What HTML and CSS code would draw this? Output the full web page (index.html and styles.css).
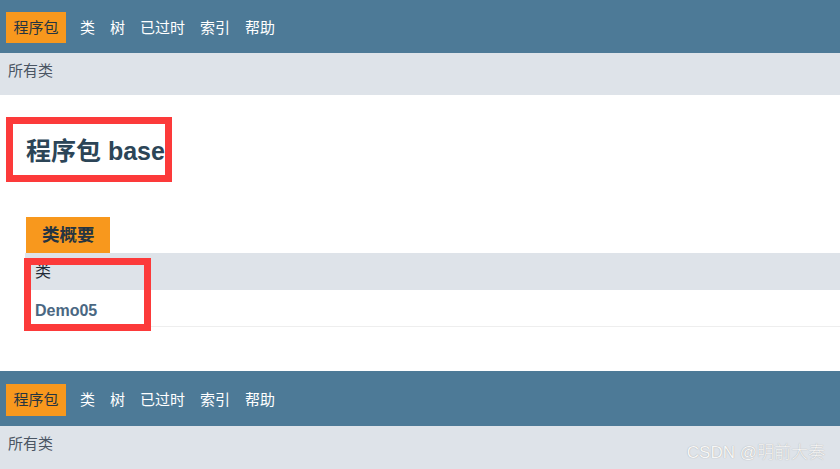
FILE: index.html
```html
<!DOCTYPE html>
<html lang="zh-CN">
<head>
<meta charset="utf-8">
<title>base</title>
<link rel="stylesheet" href="styles.css">
</head>
<body>
<div class="page">
  <nav class="topnav">
    <span class="nav-item active">程序包</span>
    <span class="nav-item">类</span>
    <span class="nav-item">树</span>
    <span class="nav-item">已过时</span>
    <span class="nav-item">索引</span>
    <span class="nav-item">帮助</span>
  </nav>
  <div class="subnav"><span class="subnav-text">所有类</span></div>

  <main class="content">
    <h1 class="title">程序包 base</h1>
    <section class="summary">
      <div class="caption">类概要</div>
      <div class="table">
        <div class="table-head">类</div>
        <div class="table-row"><a class="class-link">Demo05</a></div>
      </div>
    </section>
    <div class="mark mark-title"></div>
    <div class="mark mark-table"></div>
  </main>

  <nav class="topnav bottomnav">
    <span class="nav-item active">程序包</span>
    <span class="nav-item">类</span>
    <span class="nav-item">树</span>
    <span class="nav-item">已过时</span>
    <span class="nav-item">索引</span>
    <span class="nav-item">帮助</span>
  </nav>
  <div class="subnav subnav-bottom">
    <span class="subnav-text">所有类</span>
    <span class="watermark">CSDN @明前大奏</span>
  </div>
</div>
</body>
</html>
```

FILE: styles.css
```css
* { box-sizing: border-box; }

html, body {
  margin: 0;
  padding: 0;
  background: #ffffff;
}

body {
  font-family: "Liberation Sans", "Noto Sans CJK SC", sans-serif;
  color: #353833;
  overflow: hidden;
}

.page {
  width: 840px;
  height: 469px;
  overflow: hidden;
}

.topnav {
  height: 53px;
  background: #4d7a97;
  display: flex;
  align-items: flex-start;
  padding: 12px 0 0 6px;
}

.bottomnav {
  height: 55px;
  padding-top: 13px;
}

.nav-item {
  height: 31px;
  line-height: 31px;
  padding: 0 7.5px;
  font-size: 15px;
  color: #ffffff;
}

.bottomnav .nav-item {
  height: 32px;
  line-height: 32px;
}

.nav-item.active {
  background: #f8981d;
  color: #253441;
  margin-right: 6.5px;
}

.subnav {
  height: 42px;
  background: #dee3e9;
  padding: 8px 0 0 8px;
  display: flex;
  justify-content: space-between;
  align-items: flex-start;
}

.subnav-bottom {
  height: 43px;
}

.subnav-text {
  font-size: 15px;
  line-height: 20px;
  color: #4a5563;
}

.watermark {
  margin: 9px 15px 0 0;
  font-size: 17px;
  font-weight: 300;
  line-height: 20px;
  color: #f6f6f6;
  text-shadow: 0 0 1px #9a9a9a;
}

.content {
  position: relative;
  height: 276px;
  padding-top: 41px;
}

.title {
  margin: 0 0 0 26px;
  font-size: 25px;
  line-height: 30px;
  font-weight: bold;
  color: #2c4557;
}

.summary {
  margin: 51px 0 0 25px;
}

.caption {
  display: inline-block;
  margin-left: 1px;
  height: 36px;
  line-height: 36px;
  padding: 0 15.5px 0 16px;
  background: #f8981d;
  color: #253441;
  font-size: 17.5px;
  font-weight: bold;
}

.table-head {
  height: 37px;
  line-height: 37px;
  padding-left: 10px;
  background: #dee3e9;
  color: #1f2a36;
  font-size: 16px;
}

.table-row {
  height: 37px;
  line-height: 36px;
  padding: 3px 0 0 10px;
  border-bottom: 1px solid #eeeeee;
}

.class-link {
  font-size: 16px;
  font-weight: bold;
  color: #4a6782;
  text-decoration: none;
}

.mark {
  position: absolute;
  border: 7px solid #fc3a3a;
}

.mark-title {
  left: 6px;
  top: 22px;
  width: 166px;
  height: 65px;
}

.mark-table {
  left: 24px;
  top: 163px;
  width: 127px;
  height: 73px;
}
```
